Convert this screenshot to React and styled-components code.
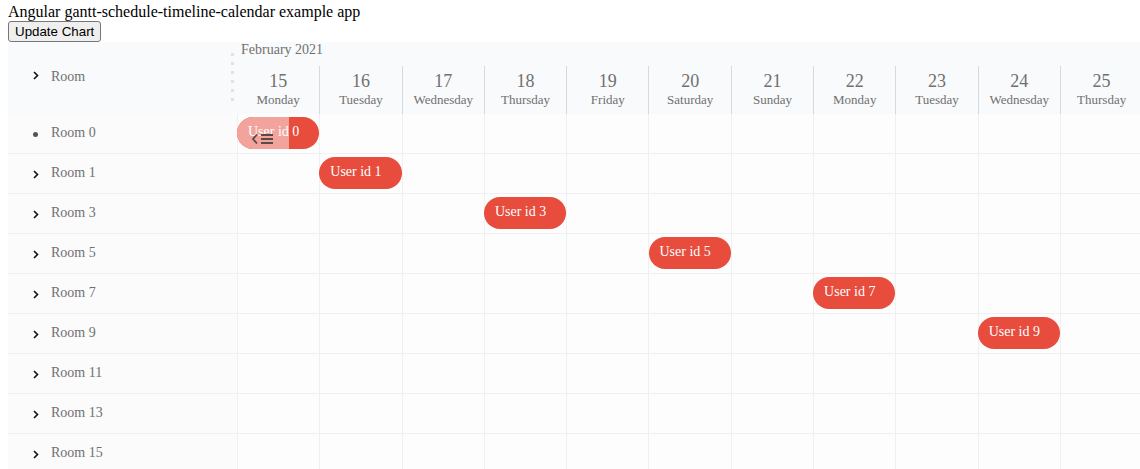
import styled, { createGlobalStyle } from "styled-components";

const COL_W = 82.3;

const days = [
  { n: 15, name: "Monday" },
  { n: 16, name: "Tuesday" },
  { n: 17, name: "Wednesday" },
  { n: 18, name: "Thursday" },
  { n: 19, name: "Friday" },
  { n: 20, name: "Saturday" },
  { n: 21, name: "Sunday" },
  { n: 22, name: "Monday" },
  { n: 23, name: "Tuesday" },
  { n: 24, name: "Wednesday" },
  { n: 25, name: "Thursday" },
];

const rows = [
  { label: "Room 0", leaf: true, item: { col: 0, text: "User id 0", cut: true } },
  { label: "Room 1", item: { col: 1, text: "User id 1" } },
  { label: "Room 3", item: { col: 3, text: "User id 3" } },
  { label: "Room 5", item: { col: 5, text: "User id 5" } },
  { label: "Room 7", item: { col: 7, text: "User id 7" } },
  { label: "Room 9", item: { col: 9, text: "User id 9" } },
  { label: "Room 11" },
  { label: "Room 13" },
  { label: "Room 15" },
];

const GlobalStyle = createGlobalStyle`
  html, body {
    overflow: hidden;
  }
  body {
    margin: 0;
    padding: 3px 8px 0;
    font-family: "Liberation Serif", "Times New Roman", serif;
    font-size: 16px;
    color: #000;
  }
`;

const Title = styled.div`
  line-height: 18px;
`;

const UpdateButton = styled.button`
  display: block;
  height: 21px;
  padding: 1px 6px;
  font-family: "Liberation Sans", Arial, sans-serif;
  font-size: 13.33px;
  color: #000;
  background: #efefef;
  border: 1px solid #767676;
  border-radius: 3px;
`;

const Chart = styled.div`
  display: grid;
  grid-template-columns: 229px max-content;
  width: max-content;
  color: #707070;
`;

const ListHeader = styled.div`
  display: flex;
  align-items: center;
  height: 72px;
  background: #f9fafb;
  padding-left: 25px;
  font-size: 14px;
`;

const ListHeaderLabel = styled.span`
  flex: 1;
  padding-bottom: 2px;
`;

const ResizeHandle = styled.div`
  align-self: center;
  width: 3px;
  height: 50px;
  margin-right: 3px;
  background: repeating-linear-gradient(
    to bottom,
    #dde3e8 0 3px,
    transparent 3px 9px
  );
`;

const TimelineHeader = styled.div`
  display: flex;
  flex-direction: column;
  background: #f9fafb;
`;

const MonthRow = styled.div`
  height: 24px;
  padding-left: 4px;
  font-size: 14px;
  line-height: 16px;
`;

const DaysRow = styled.div`
  display: grid;
  grid-template-columns: repeat(11, ${COL_W}px);
  height: 48px;
`;

const DayHead = styled.div`
  display: flex;
  flex-direction: column;
  align-items: center;
  justify-content: center;
  padding-bottom: 1px;
  &:not(:first-child) {
    border-left: 1px solid #d5d9dd;
  }
`;

const DayNumber = styled.span`
  font-size: 18px;
  line-height: 20px;
`;

const DayName = styled.span`
  font-size: 13px;
  line-height: 17px;
`;

const ListCell = styled.div`
  display: flex;
  align-items: center;
  height: 40px;
  box-sizing: border-box;
  padding-left: 25px;
  padding-bottom: 1px;
  background: #fbfbfb;
  border-bottom: 1px solid #eef0f2;
  font-size: 14px;
`;

const Toggle = styled.span`
  display: inline-flex;
  align-items: center;
  justify-content: flex-start;
  width: 18px;
  margin-top: ${(p) => (p.$raised ? "-6px" : "2px")};
`;

const Bullet = styled.span`
  display: block;
  width: 5px;
  height: 5px;
  border-radius: 50%;
  background: #555;
  margin-left: 0;
  margin-right: 13px;
  margin-top: 2px;
`;

const TimelineRow = styled.div`
  position: relative;
  display: grid;
  grid-template-columns: repeat(11, ${COL_W}px);
  height: 40px;
  box-sizing: border-box;
  background: #fdfdfd;
  border-bottom: 1px solid #eef0f2;
`;

const Cell = styled.div`
  border-left: 1px solid #eef0f2;
`;

const Item = styled.div`
  position: absolute;
  top: 3px;
  height: 32px;
  box-sizing: border-box;
  display: flex;
  align-items: center;
  padding: 0 0 3px 11px;
  border-radius: 16px;
  background: #e74c3c;
  color: #fff;
  font-size: 14px;
  overflow: hidden;
  white-space: nowrap;
`;

const CutOverlay = styled.div`
  position: absolute;
  left: 0;
  top: 0;
  bottom: 0;
  width: 52px;
  background: #f2a49c;
`;

const ItemText = styled.span`
  position: relative;
`;

const ResizeIcon = styled.svg`
  position: absolute;
  left: 15px;
  top: 16px;
`;

function Chevron() {
  return (
    <svg width="6" height="9" viewBox="0 0 6 9">
      <polyline
        points="1,1 4.5,4.5 1,8"
        fill="none"
        stroke="#111"
        strokeWidth="1.6"
      />
    </svg>
  );
}

function GanttItem({ item }) {
  return (
    <Item style={{ left: item.col * COL_W, width: COL_W }}>
      {item.cut && <CutOverlay />}
      <ItemText>{item.text}</ItemText>
      {item.cut && (
        <ResizeIcon width="22" height="12" viewBox="0 0 22 12">
          <polyline
            points="5,1.5 1,6 5,10.5"
            fill="none"
            stroke="#5b4a48"
            strokeWidth="1.8"
          />
          <line x1="9" y1="2" x2="21" y2="2" stroke="#5b4a48" strokeWidth="1.8" />
          <line x1="9" y1="6" x2="21" y2="6" stroke="#5b4a48" strokeWidth="1.8" />
          <line x1="9" y1="10" x2="21" y2="10" stroke="#5b4a48" strokeWidth="1.8" />
        </ResizeIcon>
      )}
    </Item>
  );
}

export default function App() {
  return (
    <>
      <GlobalStyle />
      <Title>Angular gantt-schedule-timeline-calendar example app</Title>
      <UpdateButton>Update Chart</UpdateButton>
      <Chart>
        <ListHeader>
          <Toggle $raised>
            <Chevron />
          </Toggle>
          <ListHeaderLabel>Room</ListHeaderLabel>
          <ResizeHandle />
        </ListHeader>
        <TimelineHeader>
          <MonthRow>February 2021</MonthRow>
          <DaysRow>
            {days.map((d, i) => (
              <DayHead key={i}>
                <DayNumber>{d.n}</DayNumber>
                <DayName>{d.name}</DayName>
              </DayHead>
            ))}
          </DaysRow>
        </TimelineHeader>
        {rows.map((r) => (
          <>
            <ListCell key={r.label + "-l"}>
              {r.leaf ? (
                <Bullet />
              ) : (
                <Toggle>
                  <Chevron />
                </Toggle>
              )}
              {r.label}
            </ListCell>
            <TimelineRow key={r.label + "-t"}>
              {days.map((d, i) => (
                <Cell key={i} />
              ))}
              {r.item && <GanttItem item={r.item} />}
            </TimelineRow>
          </>
        ))}
      </Chart>
    </>
  );
}
